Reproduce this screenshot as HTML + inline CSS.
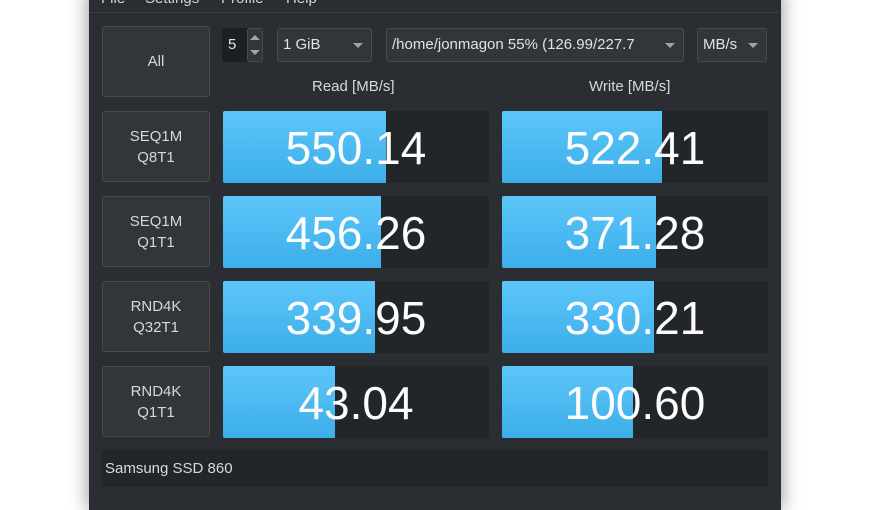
<!DOCTYPE html>
<html><head><style>
body{margin:0;width:888px;height:500px;background:#fff;position:relative;overflow:hidden;font-family:"Liberation Sans","Noto Sans CJK JP",sans-serif;}
.win{position:absolute;left:89px;top:-10px;width:692px;height:520px;background:#2a2e32;box-shadow:0 0 18px rgba(0,0,0,.45);}
.abs{position:absolute;}
.menu{color:#d0d2d4;font-size:15px;top:-10px;}
.btn{position:absolute;background:#31363b;border:1px solid #464b50;border-radius:3px;color:#d6d8da;font-size:15px;text-align:center;box-sizing:border-box;display:flex;align-items:center;justify-content:center;line-height:21px;}
.bar{position:absolute;background:#232629;border-radius:2px;overflow:hidden;}
.fill{position:absolute;left:0;top:0;bottom:0;background:linear-gradient(#5cc6fa,#3daee9);}
.val{position:absolute;left:0;right:0;top:1px;bottom:0;text-align:center;color:#fcfcfc;font-size:46px;line-height:72px;}
.combo{position:absolute;background:#31363b;border:1px solid #464b50;border-radius:3px;color:#e0e2e4;font-size:15px;box-sizing:border-box;height:34px;line-height:32px;padding-left:5px;}
.arr{position:absolute;right:8px;top:14px;width:0;height:0;border-left:5px solid transparent;border-right:5px solid transparent;border-top:5px solid #a0a4a8;}
.hdr{position:absolute;color:#d6d8da;font-size:15px;top:78px;}
</style></head><body>
<div class="win"></div>
<div class="abs menu" style="left:101px">File</div>
<div class="abs menu" style="left:145px">Settings</div>
<div class="abs menu" style="left:221px">Profile</div>
<div class="abs menu" style="left:286px">Help</div>
<div class="abs" style="left:89px;top:12px;width:692px;height:1px;background:#383c41"></div>

<div class="btn" style="left:102px;top:26px;width:108px;height:71px">All</div>

<div class="abs" style="left:222px;top:28px;width:41px;height:34px;background:#1d2023;border-radius:3px"></div>
<div class="abs" style="left:228px;top:36px;color:#e0e2e4;font-size:15px">5</div>
<div class="abs" style="left:247px;top:28px;width:16px;height:34px;background:#31363b;border:1px solid #464b50;border-radius:3px;box-sizing:border-box"></div>
<div class="abs" style="left:250px;top:35px;border-left:5px solid transparent;border-right:5px solid transparent;border-bottom:5px solid #a0a4a8"></div>
<div class="abs" style="left:250px;top:50px;border-left:5px solid transparent;border-right:5px solid transparent;border-top:5px solid #a0a4a8"></div>

<div class="combo" style="left:277px;top:28px;width:95px">1 GiB<div class="arr"></div></div>
<div class="combo" style="left:386px;top:28px;width:298px;overflow:hidden;white-space:nowrap">/home/jonmagon 55% (126.99/227.7<div class="arr"></div></div>
<div class="combo" style="left:697px;top:28px;width:70px">MB/s<div class="arr"></div></div>

<div class="hdr" style="left:312px">Read [MB/s]</div>
<div class="hdr" style="left:589px">Write [MB/s]</div>

<div class="btn" style="left:102px;top:111px;width:108px;height:71px">SEQ1M<br>Q8T1</div>
<div class="bar" style="left:223px;top:111px;width:266px;height:72px"><div class="fill" style="width:163px"></div><div class="val">550.14</div></div>
<div class="bar" style="left:502px;top:111px;width:266px;height:72px"><div class="fill" style="width:160px"></div><div class="val">522.41</div></div>

<div class="btn" style="left:102px;top:196px;width:108px;height:71px">SEQ1M<br>Q1T1</div>
<div class="bar" style="left:223px;top:196px;width:266px;height:72px"><div class="fill" style="width:158px"></div><div class="val">456.26</div></div>
<div class="bar" style="left:502px;top:196px;width:266px;height:72px"><div class="fill" style="width:154px"></div><div class="val">371.28</div></div>

<div class="btn" style="left:102px;top:281px;width:108px;height:71px">RND4K<br>Q32T1</div>
<div class="bar" style="left:223px;top:281px;width:266px;height:72px"><div class="fill" style="width:152px"></div><div class="val">339.95</div></div>
<div class="bar" style="left:502px;top:281px;width:266px;height:72px"><div class="fill" style="width:152px"></div><div class="val">330.21</div></div>

<div class="btn" style="left:102px;top:366px;width:108px;height:71px">RND4K<br>Q1T1</div>
<div class="bar" style="left:223px;top:366px;width:266px;height:72px"><div class="fill" style="width:112px"></div><div class="val">43.04</div></div>
<div class="bar" style="left:502px;top:366px;width:266px;height:72px"><div class="fill" style="width:131px"></div><div class="val">100.60</div></div>

<div class="abs" style="left:102px;top:450px;width:666px;height:37px;background:#232629;border-radius:3px;color:#d6d8da;font-size:15px;line-height:37px;padding-left:3px;box-sizing:border-box">Samsung SSD 860</div>
</body></html>
